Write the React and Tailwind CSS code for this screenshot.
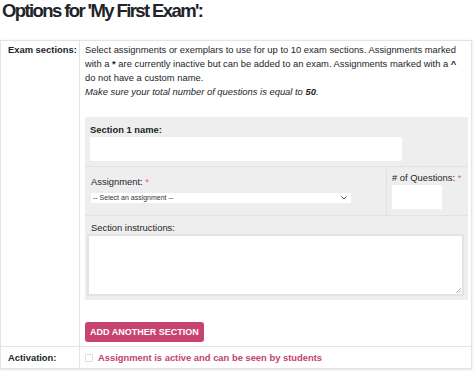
import React from "react";

export default function App() {
  return (
    <div className="w-[474px] h-[371px] overflow-hidden bg-white text-[#212529] font-['Liberation_Sans',Arial,sans-serif]">
      <h2 className="pl-[2px] text-[18.5px] leading-[22px] font-bold tracking-[-1.6px]">
        Options for 'My First Exam':
      </h2>
      <div className="mt-[18px] w-[472px] border border-[#e4e4e4] shadow-[0_1px_3px_rgba(0,0,0,0.12)] text-[9.4px] leading-[14px]">
        <div className="grid grid-cols-[78px_1fr] border-b border-[#e4e4e4]">
          <div className="pl-[7px] pt-[2px] font-bold whitespace-nowrap">Exam sections:</div>
          <div className="border-l border-[#e4e4e4] pl-[5px] pr-[4px] pt-[2px] pb-[4px]">
            <p className="whitespace-nowrap">
              <span className="block">Select assignments or exemplars to use for up to 10 exam sections. Assignments marked</span>
              <span className="block">with a <b>*</b> are currently inactive but can be added to an exam. Assignments marked with a <b>^</b></span>
              <span className="block">do not have a custom name.</span>
              <span className="block italic">Make sure your total number of questions is equal to <b>50</b>.</span>
            </p>
            <div className="mt-[18px] w-[383px] bg-[#eeeeee]">
              <div className="px-[5px] pt-[7px] pb-[5px] border-b border-[#e2e2e2]">
                <div className="font-bold leading-[12px]">Section 1 name:</div>
                <div className="mt-[1px] h-[24px] w-[312px] bg-white rounded-[2px]"></div>
              </div>
              <div className="flex border-b border-[#e2e2e2]">
                <div className="w-[302px] px-[6px] pt-[8px] border-r border-[#e2e2e2]">
                  <div className="leading-[14px]">
                    Assignment: <span className="text-[#e0606c]">*</span>
                  </div>
                  <div className="mt-[4px] flex h-[10px] w-[260px] items-center justify-between bg-white pl-[2px] pr-[4px] text-[7px] leading-[10px] text-[#333]">
                    <span>-- Select an assignment --</span>
                    <svg width="6" height="4" viewBox="0 0 6 4" fill="none" stroke="#555" strokeWidth="1">
                      <path d="M0.5 0.5 L3 3 L5.5 0.5" />
                    </svg>
                  </div>
                </div>
                <div className="flex-1 pl-[5px] pt-[4px] pb-[6px]">
                  <div className="leading-[14px] whitespace-nowrap">
                    # of Questions: <span className="text-[#e0606c]">*</span>
                  </div>
                  <div className="h-[24px] w-[50px] bg-white"></div>
                </div>
              </div>
              <div className="pl-[2px] pr-[4px] pt-[6px] pb-[4px]">
                <div className="pl-[4px] leading-[12px]">Section instructions:</div>
                <div className="relative h-[62px] w-[377px] border-2 border-[#e3e3e3] bg-white">
                  <svg className="absolute right-[1px] bottom-[1px]" width="6" height="6" viewBox="0 0 6 6" stroke="#999" strokeWidth="0.7">
                    <path d="M1 6 L6 1 M3.5 6 L6 3.5" />
                  </svg>
                </div>
              </div>
            </div>
            <button className="mt-[22px] flex h-[20px] items-center rounded-[3px] bg-[#c8436f] px-[5px] text-[9px] font-bold text-white whitespace-nowrap">
              ADD ANOTHER SECTION
            </button>
          </div>
        </div>
        <div className="grid grid-cols-[78px_1fr] h-[21px]">
          <div className="pl-[7px] pt-[4px] font-bold whitespace-nowrap">Activation:</div>
          <div className="border-l border-[#e4e4e4] pl-[5px] pt-[4px] flex items-start">
            <span className="mt-[3px] inline-block h-[8px] w-[8px] border border-[#dddddd] rounded-[1px] bg-white"></span>
            <span className="ml-[5px] font-bold text-[#c2426f] whitespace-nowrap">Assignment is active and can be seen by students</span>
          </div>
        </div>
      </div>
    </div>
  );
}
